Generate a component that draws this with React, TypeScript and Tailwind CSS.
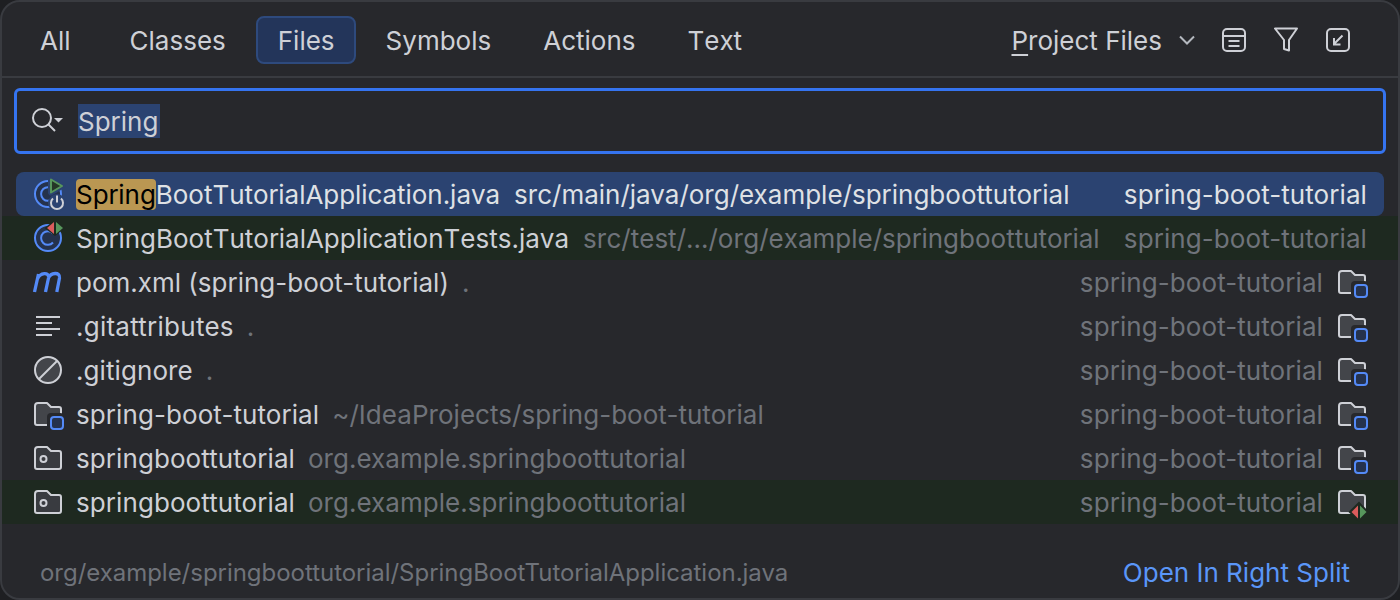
import React from "react";

const Ring = () => (
  <>
    <circle cx="16" cy="16" r="13" fill="#25324d" stroke="#548af7" strokeWidth="2" />
    <path d="M21 11.500a6.800 6.800 0 1 0 0 9" fill="none" stroke="#548af7" strokeWidth="2" />
  </>
);

const RunTestIcon = () => (
  <svg width="32" height="32" viewBox="0 0 32 32" className="shrink-0 overflow-visible">
    <Ring />
    <path d="M19 1.500 L30 8 L19 14.500Z" fill="#2b4371" stroke="#2b4371" strokeWidth="6" strokeLinejoin="round" />
    <path d="M19 1.500 L30 8 L19 14.500Z" fill="#253627" stroke="#57965c" strokeWidth="2" strokeLinejoin="round" />
    <circle cx="25" cy="25" r="9" fill="#2b4371" />
    <path d="M21 20.600a6 6 0 1 0 8 0" fill="none" stroke="#ced0d6" strokeWidth="2" />
    <path d="M25 17.500v7" stroke="#ced0d6" strokeWidth="2" />
  </svg>
);

const TestIcon = () => (
  <svg width="32" height="32" viewBox="0 0 32 32" className="shrink-0 overflow-visible">
    <Ring />
    <path d="M23 -2 L12.500 6 L23 14 L33 6Z" fill="#1e2920" />
    <path d="M22 0 L15 6 L22 12Z" fill="#db5c5c" />
    <path d="M24 0 L31 6 L24 12Z" fill="#57965c" />
  </svg>
);

const MavenIcon = () => (
  <svg width="32" height="32" viewBox="0 0 32 32" className="shrink-0">
    <path
      d="M2.500 26 L6.500 8 M5.500 13 C8 6.500,17.500 5.500,16.500 12 L13.500 26 M16.500 12 C18.500 6.500,28.500 5.500,27.500 12 L24.800 26"
      fill="none"
      stroke="#548af7"
      strokeWidth="3.300"
    />
  </svg>
);

const LinesIcon = () => (
  <svg width="32" height="32" viewBox="0 0 32 32" className="shrink-0">
    <path d="M4 7h24M4 13h16M4 19h24M4 25h16" stroke="#ced0d6" strokeWidth="2" />
  </svg>
);

const IgnoreIcon = () => (
  <svg width="32" height="32" viewBox="0 0 32 32" className="shrink-0">
    <circle cx="16" cy="16" r="13" fill="#43454a" stroke="#ced0d6" strokeWidth="2" />
    <path d="M7 25L25 7" stroke="#ced0d6" strokeWidth="2" />
  </svg>
);

const FolderBase = ({ fill = "#43454a" }: { fill?: string }) => (
  <path
    d="M3 8a3 3 0 0 1 3-3h9l4 4h8a2 2 0 0 1 2 2v14a2 2 0 0 1-2 2H5a2 2 0 0 1-2-2Z"
    fill={fill}
    stroke="#ced0d6"
    strokeWidth="2"
    strokeLinejoin="round"
  />
);

const ModuleFolder = () => (
  <svg width="32" height="32" viewBox="0 0 32 32" className="shrink-0 overflow-visible">
    <FolderBase />
    <rect x="15" y="15" width="17" height="18" rx="4" fill="#27282c" />
    <rect x="19" y="19" width="12" height="12" rx="3" fill="#25324d" stroke="#548af7" strokeWidth="2" />
  </svg>
);

const PackageFolder = () => (
  <svg width="32" height="32" viewBox="0 0 32 32" className="shrink-0">
    <FolderBase fill="#393b40" />
    <circle cx="11.500" cy="17" r="3" fill="none" stroke="#ced0d6" strokeWidth="2" />
  </svg>
);

const ConflictFolder = () => (
  <svg width="32" height="32" viewBox="0 0 32 32" className="shrink-0 overflow-visible">
    <FolderBase />
    <path d="M23 15.500 L12.500 26 L23 36 L33 26Z" fill="#1e2920" />
    <path d="M22 19.500 L15.500 26 L22 32.500Z" fill="#db5c5c" />
    <path d="M24 19.500 L30.500 26 L24 32.500Z" fill="#57965c" />
  </svg>
);

type Row = {
  icon: React.ReactNode;
  name: string;
  nameClass: string;
  path: string;
  module: React.ReactNode;
  green?: boolean;
};

const rows: Row[] = [
  {
    icon: <MavenIcon />,
    name: "pom.xml (spring-boot-tutorial)",
    nameClass: "ml-[12px] tracking-[0px]",
    path: ".",
    module: <ModuleFolder />,
  },
  {
    icon: <LinesIcon />,
    name: ".gitattributes",
    nameClass: "ml-[12px] tracking-[0.25px]",
    path: ".",
    module: <ModuleFolder />,
  },
  {
    icon: <IgnoreIcon />,
    name: ".gitignore",
    nameClass: "ml-[12px] tracking-[0.08px]",
    path: ".",
    module: <ModuleFolder />,
  },
  {
    icon: <ModuleFolder />,
    name: "spring-boot-tutorial",
    nameClass: "ml-[12px] tracking-[0.08px]",
    path: "~/IdeaProjects/spring-boot-tutorial",
    module: <ModuleFolder />,
  },
  {
    icon: <PackageFolder />,
    name: "springboottutorial",
    nameClass: "ml-[12px] tracking-[0.08px]",
    path: "org.example.springboottutorial",
    module: <ModuleFolder />,
  },
  {
    icon: <PackageFolder />,
    name: "springboottutorial",
    nameClass: "ml-[12px] tracking-[0.08px]",
    path: "org.example.springboottutorial",
    module: <ConflictFolder />,
    green: true,
  },
];

const tabs = ["Classes", "Files", "Symbols", "Actions", "Text"];

export default function App() {
  return (
    <div className="w-[1400px] h-[600px] overflow-hidden bg-[#1e1f22]" style={{ fontFamily: "Inter, sans-serif" }}>
      <div className="h-[600px] flex flex-col bg-[#27282c] border-2 border-[#393b40] rounded-[20px] text-[26px] text-[#ced0d6] overflow-hidden">
        <div className="h-[72px] pt-[2px] shrink-0 flex items-center pl-[38px] pr-[48px] border-b-2 border-[#393b40] box-content">
          <span className="mr-[60px] pt-[1px]">All</span>
          <div className="flex items-center gap-[8px] -ml-[23px] [font-kerning:none]">
            {tabs.map((t) => (
              <span
                key={t}
                className={
                  t === "Files"
                    ? "h-[48px] pl-[20px] pr-[19px] pt-[1px] flex items-center border-2 border-[#2e4a7d] rounded-[8px] bg-[#23355a]"
                    : "h-[48px] px-[22px] pt-[1px] flex items-center"
                }
              >
                {t}
              </span>
            ))}
          </div>
          <div className="ml-auto flex items-center">
            <span className="pt-[1px]">
              <span className="underline underline-offset-[4px] decoration-2">P</span>roject Files
            </span>
            <svg width="20" height="20" viewBox="0 0 20 20" className="ml-[15px]">
              <path d="M3 6.500l7 7 7-7" fill="none" stroke="#b4b8bf" strokeWidth="2" />
            </svg>
            <svg width="24" height="24" viewBox="0 0 24 24" className="ml-[25px]">
              <rect x="1" y="1" width="22" height="22" rx="4" fill="none" stroke="#ced0d6" strokeWidth="2" />
              <path d="M1 8h22M6.500 13h11M6.500 18h11" stroke="#ced0d6" strokeWidth="2" />
            </svg>
            <svg width="24" height="26" viewBox="0 0 24 26" className="ml-[28px]">
              <path d="M1 1.500h22L15 13v10.500l-5-1.500v-9Z" fill="none" stroke="#ced0d6" strokeWidth="2" strokeLinejoin="round" />
            </svg>
            <svg width="24" height="24" viewBox="0 0 24 24" className="ml-[28px]">
              <rect x="1" y="1" width="22" height="22" rx="4" fill="none" stroke="#ced0d6" strokeWidth="2" />
              <path d="M16.500 7.500L8 16M8 10v6.500h6.500" fill="none" stroke="#ced0d6" strokeWidth="2" />
            </svg>
          </div>
        </div>

        <div className="mt-[10px] mx-[12px] h-[66px] shrink-0 border-[3px] border-[#3574f0] rounded-[6px] flex items-center pl-[13px]">
          <svg width="34" height="30" viewBox="0 0 34 30" className="shrink-0">
            <circle cx="12" cy="12" r="9" fill="none" stroke="#ced0d6" strokeWidth="2" />
            <path d="M18.500 18.500l6.500 6.500" stroke="#ced0d6" strokeWidth="2" />
            <path d="M24 12h9l-4.500 4.500Z" fill="#ced0d6" />
          </svg>
          <span className="ml-[14px] bg-[#2b4371] h-[34px] w-[82px] flex items-center">Spring</span>
        </div>

        <div className="mt-[18px] flex flex-col text-[26px]">
          <div className="h-[44px] mx-[14px] pl-[16px] pr-[17px] flex items-center bg-[#2b4371] rounded-[8px] text-[#dfe1e5] whitespace-nowrap">
            <RunTestIcon />
            <span className="ml-[12px] [font-kerning:none] tracking-[-0.03px]">
              <span className="bg-[#ba9752] text-black rounded-[4px]">Spring</span>BootTutorialApplication.java
            </span>
            <span className="ml-[14px]">src/main/java/org/example/springboottutorial</span>
            <span className="ml-auto tracking-[0.08px]">spring-boot-tutorial</span>
          </div>
          <div className="h-[44px] pl-[30px] pr-[31px] flex items-center bg-[#1e2920] whitespace-nowrap">
            <TestIcon />
            <span className="ml-[12px] [font-kerning:none]">SpringBootTutorialApplicationTests.java</span>
            <span className="ml-[14px] text-[#6f737a] [font-kerning:none]">src/test/.../org/example/springboottutorial</span>
            <span className="ml-auto text-[#6f737a] tracking-[0.08px]">spring-boot-tutorial</span>
          </div>
          {rows.map((r, i) => (
            <div
              key={i}
              className={
                r.green
                  ? "h-[44px] pl-[30px] pr-[30px] flex items-center bg-[#1e2920] whitespace-nowrap"
                  : "h-[44px] pl-[30px] pr-[30px] flex items-center whitespace-nowrap"
              }
            >
              {r.icon}
              <span className={r.nameClass}>{r.name}</span>
              <span className="ml-[13px] text-[#6f737a] tracking-[0.04px]">{r.path}</span>
              <span className="ml-auto mr-[13px] text-[#6f737a] tracking-[0.08px]">spring-boot-tutorial</span>
              {r.module}
            </div>
          ))}
        </div>

        <div className="mt-auto mb-[-1px] h-[54px] shrink-0 pl-[38px] pr-[48px] flex items-center justify-between">
          <span className="text-[24px] text-[#6f737a] tracking-[-0.03px] pt-[1px]">
            org/example/springboottutorial/SpringBootTutorialApplication.java
          </span>
          <span className="text-[#5a96f8]">Open In Right Split</span>
        </div>
      </div>
    </div>
  );
}
